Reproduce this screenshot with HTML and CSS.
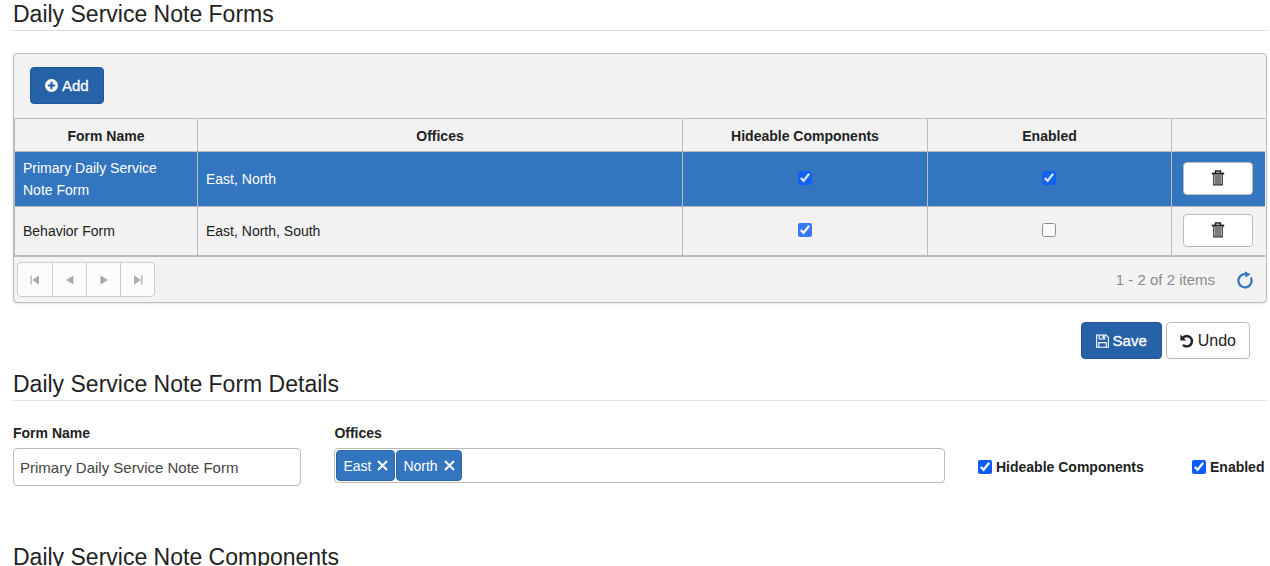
FILE: index.html
```html
<!DOCTYPE html>
<html lang="en">
<head>
    <meta charset="UTF-8">
    <meta name="viewport" content="width=device-width, initial-scale=1.0">
    <title>Daily Service Note Forms</title>
    <link rel="stylesheet" href="styles.css">
</head>
<body>

    <h2>Daily Service Note Forms</h2>

    <div class="grid">
        <div class="toolbar">
            <button type="button" class="btn btn-primary">
                <svg width="13" height="13" viewBox="0 0 13 13"><circle cx="6.5" cy="6.5" r="6.5" fill="currentColor"/><path d="M6.5 2.8v7.4M2.8 6.5h7.4" stroke="#2762a8" stroke-width="2.2"/></svg>
                Add
            </button>
        </div>

        <table>
            <colgroup>
                <col class="col-name">
                <col>
                <col class="col-hideable">
                <col class="col-enabled">
                <col class="col-delete">
            </colgroup>
            <thead>
                <tr>
                    <th>Form Name</th>
                    <th>Offices</th>
                    <th>Hideable Components</th>
                    <th>Enabled</th>
                    <th></th>
                </tr>
            </thead>
            <tbody>
                <tr class="selected">
                    <td>Primary Daily Service Note Form</td>
                    <td>East, North</td>
                    <td class="control"><input type="checkbox" aria-label="Hideable Components" checked></td>
                    <td class="control"><input type="checkbox" aria-label="Enabled" checked></td>
                    <td class="control">
                        <button type="button" class="btn-delete" aria-label="Delete">
                            <svg width="14" height="16" viewBox="0 0 14 16"><path d="M4.5 3V1h5v2" fill="none" stroke="#222" stroke-width="1.4"/><path d="M.8 2.6h12.4v2H.8z" fill="#222"/><path d="M2.8 4.5v10.3h8.4V4.5M5 5v9M7 5v9M9 5v9" fill="none" stroke="#222" stroke-width="1.2"/></svg>
                        </button>
                    </td>
                </tr>
                <tr>
                    <td>Behavior Form</td>
                    <td>East, North, South</td>
                    <td class="control"><input type="checkbox" aria-label="Hideable Components" checked></td>
                    <td class="control"><input type="checkbox" aria-label="Enabled"></td>
                    <td class="control">
                        <button type="button" class="btn-delete" aria-label="Delete">
                            <svg width="14" height="16" viewBox="0 0 14 16"><path d="M4.5 3V1h5v2" fill="none" stroke="#222" stroke-width="1.4"/><path d="M.8 2.6h12.4v2H.8z" fill="#222"/><path d="M2.8 4.5v10.3h8.4V4.5M5 5v9M7 5v9M9 5v9" fill="none" stroke="#222" stroke-width="1.2"/></svg>
                        </button>
                    </td>
                </tr>
            </tbody>
        </table>

        <div class="pager">
            <div class="pager-nav">
                <button type="button" aria-label="First page"><svg width="10" height="10" viewBox="0 0 10 10"><path d="M.5.5h1.2v9H.5zM9 .5v9L2 5z"/></svg></button>
                <button type="button" aria-label="Previous page"><svg width="10" height="10" viewBox="0 0 10 10"><path d="M8.5.5v9L1 5z"/></svg></button>
                <button type="button" aria-label="Next page"><svg width="10" height="10" viewBox="0 0 10 10"><path d="M1.5.5v9L9 5z"/></svg></button>
                <button type="button" aria-label="Last page"><svg width="10" height="10" viewBox="0 0 10 10"><path d="M8.3.5h1.2v9H8.3zM1 .5v9L8 5z"/></svg></button>
            </div>
            <span class="pager-info">1 - 2 of 2 items</span>
            <button type="button" class="refresh" aria-label="Refresh">
                <svg width="18" height="18" viewBox="0 0 18 18"><path d="M10 3.2A6.6 6.6 0 1 0 14.8 6.6" fill="none" stroke="#3375bf" stroke-width="2.2"/><path d="M8.8.3L14.6 3.2 9.6 6.6z" fill="#3375bf"/></svg>
            </button>
        </div>
    </div>

    <div class="actions">
        <button type="button" class="btn btn-primary">
            <svg width="13" height="14" viewBox="0 0 13 14"><path d="M.6 1h9.4l2.4 2.4v9.8H.6zM3.2 1v4h5.6V1M2.8 13V8.6h7.4V13" fill="none" stroke="currentColor" stroke-width="1.1"/><path d="M6.5 1.3h1.6v2.9H6.5z" fill="currentColor"/></svg>
            Save
        </button>
        <button type="button" class="btn">
            <svg width="14" height="14" viewBox="0 0 14 14"><path d="M2.8 3.8A5.2 5.2 0 1 1 3 10.8" fill="none" stroke="currentColor" stroke-width="2.4"/><path d="M.4.6v5.8h5.8z" fill="currentColor"/></svg>
            Undo
        </button>
    </div>

    <h2>Daily Service Note Form Details</h2>

    <form class="details">
        <div class="field field-name">
            <label for="form-name">Form Name</label>
            <input type="text" id="form-name" value="Primary Daily Service Note Form">
        </div>
        <div class="field field-offices">
            <label for="offices">Offices</label>
            <div class="multiselect">
                <button type="button" class="tag">East <svg width="11" height="11" viewBox="0 0 11 11"><path d="M1 1l9 9M10 1l-9 9" stroke="currentColor" stroke-width="2"/></svg></button>
                <button type="button" class="tag">North <svg width="11" height="11" viewBox="0 0 11 11"><path d="M1 1l9 9M10 1l-9 9" stroke="currentColor" stroke-width="2"/></svg></button>
                <input type="text" id="offices">
            </div>
        </div>
        <label class="check check-hideable"><input type="checkbox" checked> Hideable Components</label>
        <label class="check check-enabled"><input type="checkbox" checked> Enabled</label>
    </form>

    <h2>Daily Service Note Components</h2>

</body>
</html>
```

FILE: styles.css
```css
* {
    box-sizing: border-box;
}

body {
    margin: 0;
    padding: 0 3px 0 13px;
    background: #fff;
    color: #222;
    font-family: "Liberation Sans", Arial, sans-serif;
    font-size: 14px;
    line-height: 22px;
}

h2 {
    margin: 0;
    padding-bottom: 2px;
    border-bottom: 1px solid #ddd;
    font-size: 23px;
    font-weight: normal;
    line-height: 28px;
}

button,
input {
    font-family: inherit;
    color: inherit;
}

input[type="checkbox"] {
    width: 14px;
    height: 14px;
    margin: 0;
    accent-color: #0a5cff;
}

.grid {
    margin-top: 22px;
    border: 1px solid #bbb;
    border-radius: 4px;
    background: #f2f2f2;
    box-shadow: 0 1px 2px rgba(0, 0, 0, 0.1);
}

.toolbar {
    display: flex;
    padding: 13px 16px 14px;
}

.btn {
    display: inline-flex;
    align-items: center;
    gap: 4px;
    height: 37px;
    padding: 0 13px;
    border: 1px solid #bbb;
    border-radius: 4px;
    background: #fff;
    font-size: 16px;
}

.btn-primary {
    padding: 0 14px;
    border-color: #20559a;
    background: #2762a8;
    color: #fff;
    font-size: 15px;
    -webkit-text-stroke: 0.3px #fff;
}

table {
    width: calc(100% - 1px);
    border-collapse: separate;
    border-spacing: 0;
    border-bottom: 2px solid #bbb;
    table-layout: fixed;
}

.col-name {
    width: 183px;
}

.col-hideable {
    width: 245px;
}

.col-enabled {
    width: 244px;
}

.col-delete {
    width: 94px;
}

th,
td {
    padding: 0 8px;
    border-top: 1px solid #bbb;
    border-left: 1px solid #bbb;
    text-align: left;
}

th {
    height: 33px;
    padding-top: 2px;
    text-align: center;
}

td {
    height: 49px;
}

.selected td {
    height: 55px;
    background: #3375bf;
    color: #fff;
}

td.control {
    padding: 0 9px 2px 8px;
}

td input[type="checkbox"] {
    display: block;
    margin: 0 auto;
    opacity: 0.8;
}

.btn-delete {
    display: flex;
    align-items: center;
    justify-content: center;
    width: 70px;
    height: 33px;
    margin: 0 auto;
    padding: 0 1px 0 0;
    border: 1px solid #bbb;
    border-radius: 4px;
    background: #fff;
}

.pager {
    display: flex;
    align-items: center;
    height: 45px;
    padding: 0 12px 0 3px;
}

.pager-nav {
    display: flex;
    border: 1px solid #ccc;
    border-radius: 4px;
    background: #fcfcfc;
}

.pager-nav button {
    display: flex;
    align-items: center;
    justify-content: center;
    width: 34px;
    height: 33px;
    padding: 0;
    border: 0;
    background: none;
}

.pager-nav button + button {
    border-left: 1px solid #ccc;
}

.pager-nav svg {
    fill: #aaa;
}

.pager-info {
    margin-left: auto;
    color: #8c8c8c;
    font-size: 15px;
}

.refresh {
    display: flex;
    margin-left: 21px;
    padding: 0;
    border: 0;
    background: none;
}

.actions {
    display: flex;
    justify-content: flex-end;
    gap: 4px;
    margin: 19px 17px 11px 0;
}

.details {
    display: flex;
    gap: 33px;
    margin: 21px 0 57px;
}

.field {
    display: flex;
    flex-direction: column;
    gap: 4px;
}

.field-name {
    width: 23%;
}

.field-offices {
    flex: 1;
}

.details label {
    font-weight: bold;
}

.field-name input {
    width: 100%;
    height: 38px;
    padding: 0 6px;
    border: 1px solid #bbb;
    border-radius: 4px;
    color: #444;
    font-size: 15px;
}

.multiselect {
    display: flex;
    gap: 1px;
    height: 35px;
    padding: 1px;
    border: 1px solid #bbb;
    border-radius: 4px;
}

.multiselect input {
    flex: 1;
    min-width: 0;
    border: 0;
    outline: 0;
}

.tag {
    display: flex;
    align-items: center;
    gap: 6px;
    padding: 0 6px;
    border: 1px solid #2b66ab;
    border-radius: 4px;
    background: #3375bf;
    color: #fff;
    font-size: 14px;
}

.check {
    display: flex;
    align-items: center;
    gap: 4px;
    height: 22px;
    margin-top: 34px;
    white-space: nowrap;
}

.check-hideable {
    width: 181px;
}

.check-enabled {
    width: 75px;
}
```
